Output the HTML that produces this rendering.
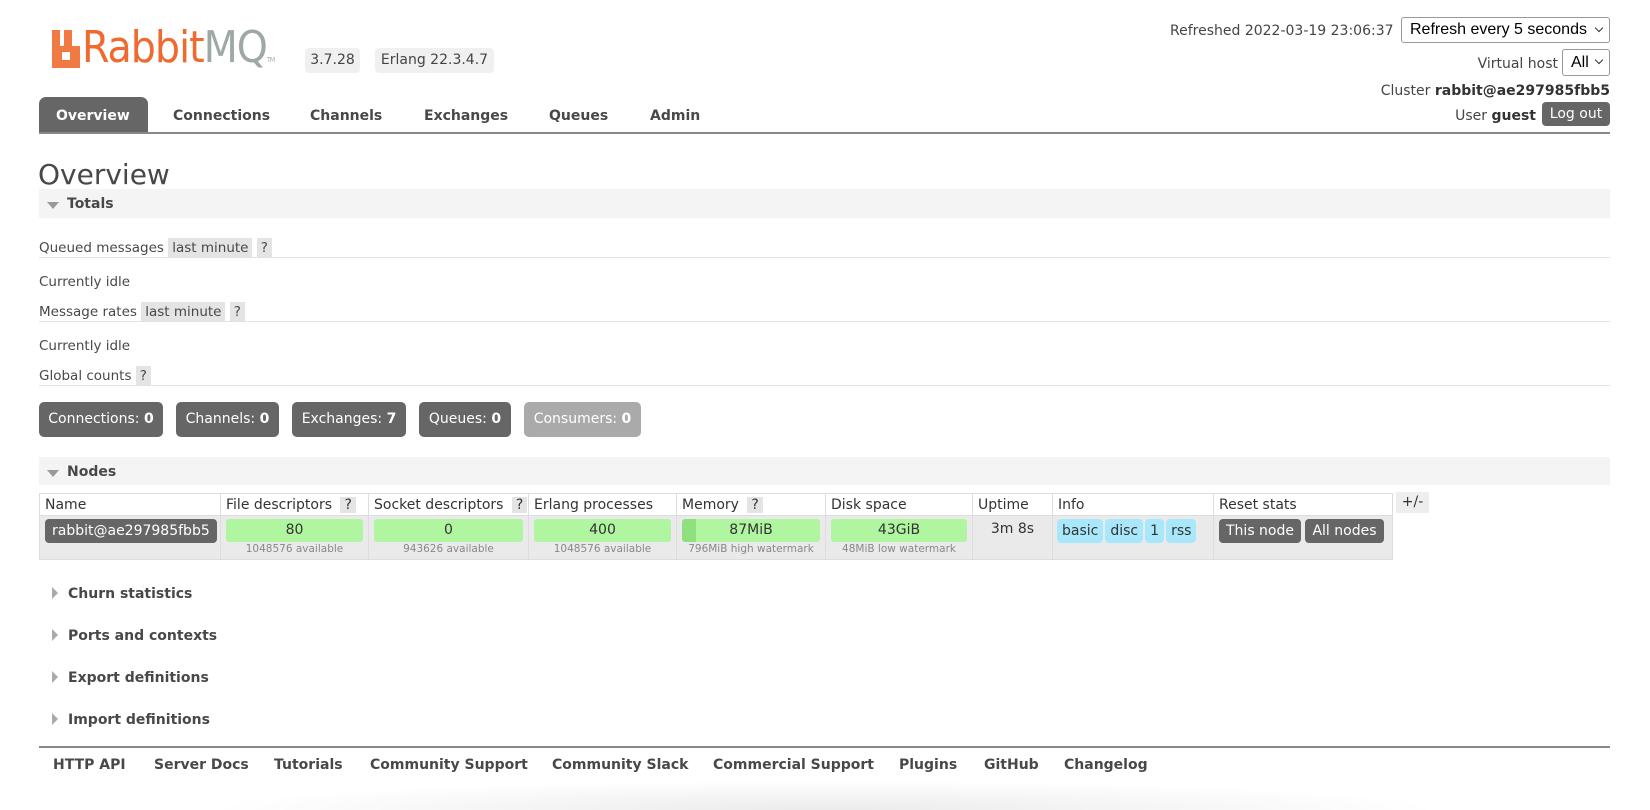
<!DOCTYPE html>
<html><head><meta charset="utf-8">
<style>
*{margin:0;padding:0;box-sizing:border-box}
body{width:1650px;height:803px;background:#fff;font-family:"DejaVu Sans","Liberation Sans",sans-serif;font-size:13.5px;color:#484848;position:relative;overflow:hidden}
.a{position:absolute;white-space:nowrap}
.c{line-height:20px;height:20px;margin-top:-9px}
.badge{background:#f0f0f0;border-radius:4px;color:#444;font-size:14px;text-align:center;line-height:25px;height:25px}
.tab{font-weight:bold;font-size:14px;color:#484848}
.bar{background:#f4f4f4;left:39px;width:1571px}
.bar b{position:absolute;left:28px;top:7px;font-size:14px;color:#484848}
.tri{position:absolute;left:8px;top:13px;width:0;height:0;border-left:6px solid transparent;border-right:6px solid transparent;border-top:7px solid #999}
.hr{left:39px;width:1571px;height:1px;background:#e2e2e2}
.gb{background:#e4e4e4;padding:0 4px;line-height:20px;height:20px;display:inline-block}
.cnt{background:#666;color:#fff;border-radius:5px;height:35px;line-height:35px;text-align:center;font-size:14px;top:402px}
.rt{right:40px;text-align:right}
.sel{border:1px solid #999;border-radius:3px;background:#fff;color:#000;font-family:"Liberation Sans",sans-serif;font-size:16px;padding-left:8px;line-height:24px}
.sel i{position:absolute;right:7px;top:7px;width:6px;height:6px;border-right:1px solid #333;border-bottom:1px solid #333;transform:rotate(45deg)}
table{position:absolute;left:39px;top:493px;border-collapse:collapse;font-size:14px;color:#333}
td,th{border:1px solid #ddd;font-weight:normal;text-align:left;padding:0}
th{height:22px;padding-left:5px;background:#fff;position:relative}
td{background:#eaeaea;height:44px;vertical-align:top;text-align:center}
.g{background:#b0f5a0;border-radius:3px;margin:3px 5px 0;height:23px;line-height:23px;font-size:14px;color:#333}
.s{font-size:10.5px;color:#888;line-height:14px}
.q{display:inline-block;background:#e4e4e4;padding:0 4px;margin-left:4px}
.pill{display:inline-block;background:#666;color:#fff;border-radius:4px;height:24px;line-height:24px;padding:0 7px;font-size:14px}
.bl{display:inline-block;background:#a8e8fa;border-radius:4px;height:24px;line-height:24px;padding:0 5px;margin-right:2px;font-size:14px}
.sec{left:52px;font-weight:bold;font-size:14px;color:#484848}
.sec i{display:inline-block;width:0;height:0;border-top:6px solid transparent;border-bottom:6px solid transparent;border-left:6px solid #aaa;margin-right:10px;vertical-align:-1px}
.ft{font-weight:bold;font-size:14px;color:#484848;top:757px}
</style></head><body>

<div class="a" style="left:52px;top:30px;width:28px;height:38px">
<svg width="28" height="38" viewBox="0 0 28 38"><path d="M0 0H8V16H12V0H20V16H28V38H0Z" fill="#f06a2f" opacity=".9"/><rect x="10" y="22" width="8" height="8" fill="#fff"/></svg></div>
<div class="a" style="left:82px;top:20px;font-family:'DejaVu Sans Condensed','DejaVu Sans',sans-serif;font-size:44px;font-weight:300;letter-spacing:-1px;line-height:56px;color:#f06a2f">Rabbit<span style="color:#9fa9a3">MQ</span><span style="font-size:7px;color:#aaa">TM</span></div>
<div class="a badge" style="left:305px;top:48px;width:55px">3.7.28</div>
<div class="a badge" style="left:375px;top:48px;width:119px">Erlang 22.3.4.7</div>

<div class="a c" style="left:1170px;top:30px;font-size:14px;color:#444">Refreshed 2022-03-19 23:06:37</div>
<div class="a sel" style="left:1401px;top:17px;width:209px;height:26px">Refresh every 5 seconds<i></i></div>
<div class="a c" style="right:92px;top:63px;font-size:14px;color:#444">Virtual host</div>
<div class="a sel" style="left:1562px;top:49px;width:48px;height:27px;line-height:25px">All<i></i></div>
<div class="a c rt" style="top:90px;font-size:14px;color:#444">Cluster <b style="color:#333">rabbit@ae297985fbb5</b></div>
<div class="a c" style="right:114px;top:115px;font-size:14px;color:#444">User <b style="color:#333">guest</b></div>
<div class="a" style="left:1542px;top:102px;width:68px;height:24px;background:#666;color:#fff;border-radius:4px;text-align:center;line-height:24px;font-size:14px">Log out</div>

<div class="a" style="left:39px;top:97px;width:109px;height:36px;background:#666;border-radius:7px 7px 0 0"></div>
<div class="a c tab" style="left:56px;top:115px;color:#fff">Overview</div>
<div class="a c tab" style="left:173px;top:115px">Connections</div>
<div class="a c tab" style="left:310px;top:115px">Channels</div>
<div class="a c tab" style="left:424px;top:115px">Exchanges</div>
<div class="a c tab" style="left:549px;top:115px">Queues</div>
<div class="a c tab" style="left:650px;top:115px">Admin</div>
<div class="a" style="left:39px;top:132px;width:1571px;height:2px;background:#888"></div>

<div class="a" style="left:38px;top:157px;font-size:28px;line-height:36px;color:#484848">Overview</div>

<div class="a bar" style="top:189px;height:29px"><span class="tri"></span><b>Totals</b></div>

<div class="a c" style="left:39px;top:247px">Queued messages <span class="gb">last minute</span> <span class="gb">?</span></div>
<div class="a hr" style="top:257px"></div>
<div class="a c" style="left:39px;top:281px">Currently idle</div>
<div class="a c" style="left:39px;top:311px">Message rates <span class="gb">last minute</span> <span class="gb">?</span></div>
<div class="a hr" style="top:321px"></div>
<div class="a c" style="left:39px;top:345px">Currently idle</div>
<div class="a c" style="left:39px;top:375px">Global counts <span class="gb">?</span></div>
<div class="a hr" style="top:385px"></div>

<div class="a cnt" style="left:39px;width:124px">Connections: <b>0</b></div>
<div class="a cnt" style="left:176px;width:103px">Channels: <b>0</b></div>
<div class="a cnt" style="left:292px;width:114px">Exchanges: <b>7</b></div>
<div class="a cnt" style="left:419px;width:92px">Queues: <b>0</b></div>
<div class="a cnt" style="left:524px;width:117px;background:#aaa">Consumers: <b>0</b></div>

<div class="a bar" style="top:457px;height:28px"><span class="tri"></span><b>Nodes</b></div>

<table>
<tr>
<th style="width:181px">Name</th>
<th style="width:148px">File descriptors <span class="q">?</span></th>
<th style="width:160px">Socket descriptors <span class="q">?</span></th>
<th style="width:148px">Erlang processes</th>
<th style="width:149px">Memory <span class="q">?</span></th>
<th style="width:147px">Disk space</th>
<th style="width:80px">Uptime</th>
<th style="width:161px">Info</th>
<th style="width:179px">Reset stats</th>
</tr>
<tr>
<td style="text-align:left;padding:3px 0 0 5px"><span class="pill">rabbit@ae297985fbb5</span></td>
<td><div class="g">80</div><div class="s">1048576 available</div></td>
<td><div class="g">0</div><div class="s">943626 available</div></td>
<td><div class="g">400</div><div class="s">1048576 available</div></td>
<td><div class="g" style="background:linear-gradient(90deg,#8fe07f 0,#8fe07f 14px,#b0f5a0 14px)">87MiB</div><div class="s">796MiB high watermark</div></td>
<td><div class="g">43GiB</div><div class="s">48MiB low watermark</div></td>
<td style="padding-top:5px;font-size:14px;color:#333">3m 8s</td>
<td style="text-align:left;padding:3px 0 0 4px"><span class="bl">basic</span><span class="bl">disc</span><span class="bl">1</span><span class="bl">rss</span></td>
<td style="text-align:left;padding:3px 0 0 5px"><span class="pill">This node</span> <span class="pill">All nodes</span></td>
</tr>
</table>
<div class="a" style="left:1396px;top:492px;width:33px;height:21px;background:#eee;text-align:center;line-height:21px;font-size:14px;color:#333">+/-</div>

<div class="a c sec" style="top:593px"><i></i>Churn statistics</div>
<div class="a c sec" style="top:635px"><i></i>Ports and contexts</div>
<div class="a c sec" style="top:677px"><i></i>Export definitions</div>
<div class="a c sec" style="top:719px"><i></i>Import definitions</div>

<div class="a" style="left:39px;top:746px;width:1571px;height:2px;background:#888"></div>
<div class="a ft" style="left:53px">HTTP API</div>
<div class="a ft" style="left:154px">Server Docs</div>
<div class="a ft" style="left:274px">Tutorials</div>
<div class="a ft" style="left:370px">Community Support</div>
<div class="a ft" style="left:552px">Community Slack</div>
<div class="a ft" style="left:713px">Commercial Support</div>
<div class="a ft" style="left:899px">Plugins</div>
<div class="a ft" style="left:984px">GitHub</div>
<div class="a ft" style="left:1064px">Changelog</div>

<div class="a" style="left:200px;top:780px;width:1250px;height:30px;background:radial-gradient(ellipse at 50% 100%,rgba(0,0,0,.08),rgba(0,0,0,0) 70%)"></div>
</body></html>
